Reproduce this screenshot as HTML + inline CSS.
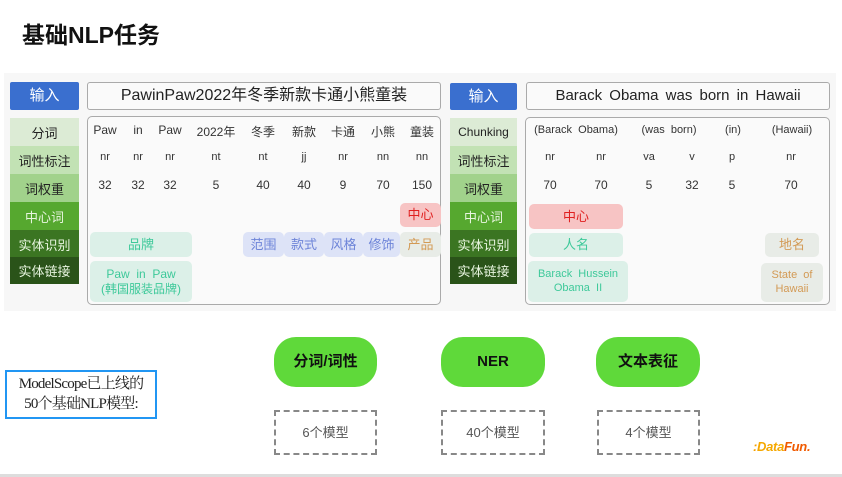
<!DOCTYPE html>
<html><head><meta charset="utf-8"><style>
*{margin:0;padding:0;box-sizing:border-box}
body{width:842px;height:477px;background:#fff;position:relative;overflow:hidden;font-family:"Liberation Sans","Noto Sans CJK SC",sans-serif;color:#222}
.a{position:absolute;display:flex;align-items:center;justify-content:center;text-align:center;line-height:1.2}
.t{position:absolute;transform:translateX(-50%);font-size:12px;white-space:nowrap;color:#333}
.lab{position:absolute;width:69px;height:28px;display:flex;align-items:center;justify-content:center;font-size:13px}
.pill{border-radius:5px;font-size:13px}
</style></head><body>
<div style="position:absolute;left:22px;top:16px;font-size:23px;font-weight:bold;color:#111">基础NLP任务</div>
<div style="position:absolute;left:4px;top:73px;width:832px;height:238px;background:#f7f7f7"></div>

<!-- left -->
<div class="a" style="left:10px;top:82px;width:69px;height:28px;background:#3a6fcf;color:#fff;font-size:15px;border-radius:2px">输入</div>
<div class="a" style="left:87px;top:82px;width:354px;height:28px;border:1px solid #aaa;border-radius:3px;background:#fafafa;font-size:16px;color:#222">PawinPaw2022年冬季新款卡通小熊童装</div>
<div class="lab" style="left:10px;top:118px;background:#dcebd5;color:#222">分词</div>
<div class="lab" style="left:10px;top:146px;background:#c2e2b4;color:#222">词性标注</div>
<div class="lab" style="left:10px;top:174px;background:#a1d28b;color:#222">词权重</div>
<div class="lab" style="left:10px;top:202px;background:#56a82f;color:#e8f5e0">中心词</div>
<div class="lab" style="left:10px;top:230px;background:#3b7522;color:#e8f5e0">实体识别</div>
<div class="lab" style="left:10px;top:257px;width:69px;height:27px;background:#2a5319;color:#e8f5e0">实体链接</div>
<div style="position:absolute;left:87px;top:116px;width:354px;height:189px;border:1px solid #aaa;border-radius:5px;background:#fafafa"></div>
<div class="t" style="left:105px;top:123px">Paw</div><div class="t" style="left:138px;top:123px">in</div><div class="t" style="left:170px;top:123px">Paw</div><div class="t" style="left:216px;top:123px">2022年</div><div class="t" style="left:263px;top:123px">冬季</div><div class="t" style="left:304px;top:123px">新款</div><div class="t" style="left:343px;top:123px">卡通</div><div class="t" style="left:383px;top:123px">小熊</div><div class="t" style="left:422px;top:123px">童装</div>
<div class="t" style="left:105px;top:151px;font-size:11px">nr</div><div class="t" style="left:138px;top:151px;font-size:11px">nr</div><div class="t" style="left:170px;top:151px;font-size:11px">nr</div><div class="t" style="left:216px;top:151px;font-size:11px">nt</div><div class="t" style="left:263px;top:151px;font-size:11px">nt</div><div class="t" style="left:304px;top:151px;font-size:11px">jj</div><div class="t" style="left:343px;top:151px;font-size:11px">nr</div><div class="t" style="left:383px;top:151px;font-size:11px">nn</div><div class="t" style="left:422px;top:151px;font-size:11px">nn</div>
<div class="t" style="left:105px;top:178px">32</div><div class="t" style="left:138px;top:178px">32</div><div class="t" style="left:170px;top:178px">32</div><div class="t" style="left:216px;top:178px">5</div><div class="t" style="left:263px;top:178px">40</div><div class="t" style="left:304px;top:178px">40</div><div class="t" style="left:343px;top:178px">9</div><div class="t" style="left:383px;top:178px">70</div><div class="t" style="left:422px;top:178px">150</div>
<div class="a pill" style="left:400px;top:203px;width:41px;height:24px;background:#f7c4c4;color:#e02020">中心</div>
<div class="a pill" style="left:90px;top:232px;width:102px;height:25px;background:#dcf0e8;color:#3ec99a">品牌</div>
<div class="a pill" style="left:243px;top:232px;width:41px;height:25px;background:#dde3f7;color:#6d84d8">范围</div>
<div class="a pill" style="left:284px;top:232px;width:40px;height:25px;background:#dde3f7;color:#6d84d8">款式</div>
<div class="a pill" style="left:324px;top:232px;width:39px;height:25px;background:#dde3f7;color:#6d84d8">风格</div>
<div class="a pill" style="left:363px;top:232px;width:37px;height:25px;background:#dde3f7;color:#6d84d8">修饰</div>
<div class="a pill" style="left:400px;top:232px;width:41px;height:25px;background:#e8ece7;color:#d39a55">产品</div>
<div class="a pill" style="left:90px;top:261px;width:102px;height:41px;background:#dcf0e8;color:#3ec99a;font-size:12px">Paw&nbsp; in&nbsp; Paw<br>(韩国服装品牌)</div>

<!-- right -->
<div class="a" style="left:450px;top:83px;width:67px;height:27px;background:#3a6fcf;color:#fff;font-size:15px;border-radius:2px">输入</div>
<div class="a" style="left:526px;top:82px;width:304px;height:28px;border:1px solid #aaa;border-radius:3px;background:#fafafa;font-size:15px;color:#222;word-spacing:3px">Barack Obama was born in Hawaii</div>
<div class="lab" style="left:450px;top:118px;width:67px;background:#dcebd5;color:#222;font-size:12px">Chunking</div>
<div class="lab" style="left:450px;top:146px;width:67px;background:#c2e2b4;color:#222">词性标注</div>
<div class="lab" style="left:450px;top:174px;width:67px;background:#a1d28b;color:#222">词权重</div>
<div class="lab" style="left:450px;top:202px;width:67px;background:#56a82f;color:#e8f5e0">中心词</div>
<div class="lab" style="left:450px;top:230px;width:67px;background:#3b7522;color:#e8f5e0">实体识别</div>
<div class="lab" style="left:450px;top:257px;width:67px;height:27px;background:#2a5319;color:#e8f5e0">实体链接</div>
<div style="position:absolute;left:525px;top:117px;width:305px;height:188px;border:1px solid #aaa;border-radius:5px;background:#fafafa"></div>
<div class="t" style="left:576px;top:124px;font-size:11px">(Barack&nbsp; Obama)</div><div class="t" style="left:669px;top:124px;font-size:11px">(was&nbsp; born)</div><div class="t" style="left:733px;top:124px;font-size:11px">(in)</div><div class="t" style="left:792px;top:124px;font-size:11px">(Hawaii)</div>
<div class="t" style="left:550px;top:151px;font-size:11px">nr</div><div class="t" style="left:601px;top:151px;font-size:11px">nr</div><div class="t" style="left:649px;top:151px;font-size:11px">va</div><div class="t" style="left:692px;top:151px;font-size:11px">v</div><div class="t" style="left:732px;top:151px;font-size:11px">p</div><div class="t" style="left:791px;top:151px;font-size:11px">nr</div>
<div class="t" style="left:550px;top:178px">70</div><div class="t" style="left:601px;top:178px">70</div><div class="t" style="left:649px;top:178px">5</div><div class="t" style="left:692px;top:178px">32</div><div class="t" style="left:732px;top:178px">5</div><div class="t" style="left:791px;top:178px">70</div>
<div class="a pill" style="left:529px;top:204px;width:94px;height:25px;background:#f7c4c4;color:#e02020">中心</div>
<div class="a pill" style="left:529px;top:233px;width:94px;height:24px;background:#dcf0e8;color:#3ec99a">人名</div>
<div class="a pill" style="left:765px;top:233px;width:54px;height:24px;background:#e8ece7;color:#d39a55">地名</div>
<div class="a pill" style="left:528px;top:261px;width:100px;height:41px;background:#dcf0e8;color:#3ec99a;font-size:11px">Barack&nbsp; Hussein<br>Obama&nbsp; II</div>
<div class="a pill" style="left:761px;top:263px;width:62px;height:39px;background:#e8ece7;color:#d39a55;font-size:11px">State&nbsp; of<br>Hawaii</div>

<!-- bottom -->
<div class="a" style="left:5px;top:370px;width:152px;height:49px;border:2px solid #2196f3;font-family:'Liberation Serif','Noto Serif CJK SC',serif;font-size:15px;letter-spacing:-0.8px;white-space:nowrap;color:#222;line-height:1.3">ModelScope已上线的<br>50个基础NLP模型:</div>
<div class="a" style="left:274px;top:337px;width:103px;height:50px;background:#5fd93a;border-radius:22px;font-weight:bold;font-size:15px;color:#111">分词/词性</div>
<div class="a" style="left:441px;top:337px;width:104px;height:50px;background:#5fd93a;border-radius:22px;font-weight:bold;font-size:15px;color:#111">NER</div>
<div class="a" style="left:596px;top:337px;width:104px;height:50px;background:#5fd93a;border-radius:22px;font-weight:bold;font-size:15px;color:#111">文本表征</div>
<div class="a" style="left:274px;top:410px;width:103px;height:45px;border:2px dashed #888;font-size:13px;color:#555">6个模型</div>
<div class="a" style="left:441px;top:410px;width:104px;height:45px;border:2px dashed #888;font-size:13px;color:#555">40个模型</div>
<div class="a" style="left:597px;top:410px;width:103px;height:45px;border:2px dashed #888;font-size:13px;color:#555">4个模型</div>
<div style="position:absolute;left:753px;top:439px;font-size:13px;font-weight:bold;font-style:italic;color:#f5a000;letter-spacing:-0.3px">:<span style="color:#f5a800">Data</span><span style="color:#f05a00">Fun.</span></div>
<div style="position:absolute;left:0;top:474px;width:842px;height:3px;background:#ddd"></div>
</body></html>
